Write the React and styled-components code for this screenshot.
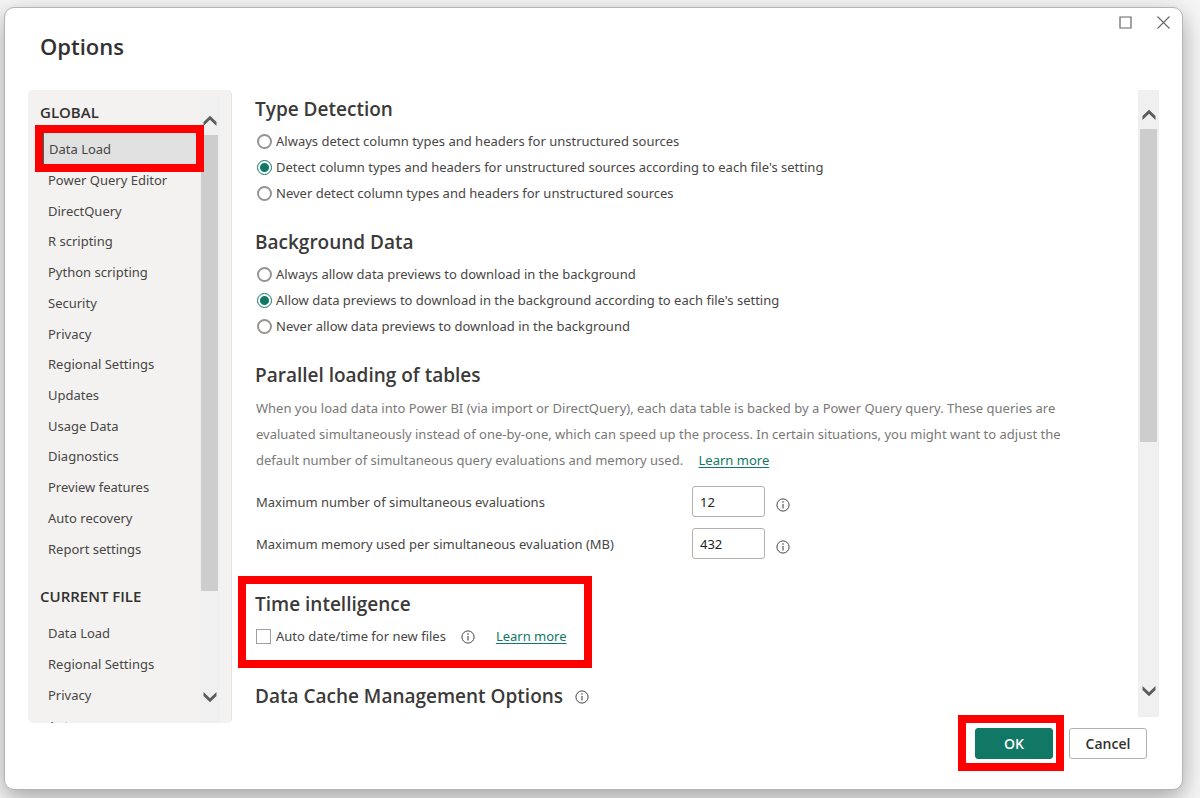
import React, { useState } from 'react';
import styled, { createGlobalStyle, css } from 'styled-components';

const GLOBAL_ITEMS = [
  'Data Load',
  'Power Query Editor',
  'DirectQuery',
  'R scripting',
  'Python scripting',
  'Security',
  'Privacy',
  'Regional Settings',
  'Updates',
  'Usage Data',
  'Diagnostics',
  'Preview features',
  'Auto recovery',
  'Report settings',
];

const FILE_ITEMS = ['Data Load', 'Regional Settings', 'Privacy', 'Auto recovery'];

const TYPE_OPTIONS = [
  'Always detect column types and headers for unstructured sources',
  "Detect column types and headers for unstructured sources according to each file's setting",
  'Never detect column types and headers for unstructured sources',
];

const BACKGROUND_OPTIONS = [
  'Always allow data previews to download in the background',
  "Allow data previews to download in the background according to each file's setting",
  'Never allow data previews to download in the background',
];

function Chevron({ down }) {
  return (
    <svg width="14" height="12" viewBox="0 0 14 12" aria-hidden="true">
      <path
        d={down ? 'M0.5 1v4L7 11.2 13.5 5V1L7 7.2z' : 'M0.5 11V7L7 0.8 13.5 7v4L7 4.8z'}
        fill="#5c5c5c"
      />
    </svg>
  );
}

function Scrollbar({ thumb, pad }) {
  return (
    <Track $pad={pad}>
      <ArrowButton type="button" aria-label="Scroll up">
        <Chevron />
      </ArrowButton>
      <Lane $pad={pad}>
        <Thumb $size={thumb} />
      </Lane>
      <ArrowButton type="button" aria-label="Scroll down">
        <Chevron down />
      </ArrowButton>
    </Track>
  );
}

function Info({ label }) {
  return (
    <InfoButton type="button" aria-label={label}>
      <svg width="14" height="14" viewBox="0 0 14 14" aria-hidden="true">
        <circle cx="7" cy="7" r="6.1" fill="none" stroke="#484644" />
        <path d="M7 6v4.4" stroke="#484644" strokeWidth="1.1" />
        <circle cx="7" cy="4" r="0.8" fill="#484644" />
      </svg>
    </InfoButton>
  );
}

function RadioGroup({ title, name, options }) {
  const [value, setValue] = useState(1);
  return (
    <Section>
      <Heading>{title}</Heading>
      {options.map((text, i) => (
        <Choice key={text}>
          <Radio name={name} checked={value === i} onChange={() => setValue(i)} />
          {text}
        </Choice>
      ))}
    </Section>
  );
}

function App() {
  return (
    <Page>
      <GlobalStyle />
      <Dialog role="dialog" aria-labelledby="title">
        <WindowBar>
          <WindowButton type="button" aria-label="Maximize">
            <svg width="13" height="13" viewBox="0 0 13 13">
              <path d="M1 1h11v11H1z" fill="none" stroke="#666" strokeWidth="1.2" />
            </svg>
          </WindowButton>
          <WindowButton type="button" aria-label="Close">
            <svg width="13" height="13" viewBox="0 0 13 13">
              <path d="M0.5 0.5l12 12M12.5 0.5l-12 12" fill="none" stroke="#666" strokeWidth="1.1" />
            </svg>
          </WindowButton>
        </WindowBar>
        <Title id="title">Options</Title>

        <Body>
          <Sidebar>
            <NavScroll>
              <NavTitle>GLOBAL</NavTitle>
              <NavList $height="430px">
                {GLOBAL_ITEMS.map((item, i) => (
                  <li key={item}>
                    <NavLink href="#" $active={i === 0}>{item}</NavLink>
                  </li>
                ))}
              </NavList>
              <NavTitle $second>CURRENT FILE</NavTitle>
              <NavList $height="123px">
                {FILE_ITEMS.map((item) => (
                  <li key={item}>
                    <NavLink href="#">{item}</NavLink>
                  </li>
                ))}
              </NavList>
            </NavScroll>
            <Scrollbar thumb="83%" />
          </Sidebar>

          <Content>
            <RadioGroup title="Type Detection" name="types" options={TYPE_OPTIONS} />
            <RadioGroup title="Background Data" name="background" options={BACKGROUND_OPTIONS} />
            <Section>
              <Heading>Parallel loading of tables</Heading>
              <Description>
                When you load data into Power BI (via import or DirectQuery), each data table is
                backed by a Power Query query. These queries are evaluated simultaneously instead
                of one-by-one, which can speed up the process. In certain situations, you might
                want to adjust the default number of simultaneous query evaluations and memory
                used. <Link href="#">Learn more</Link>
              </Description>
              <Field>
                <label htmlFor="evaluations">Maximum number of simultaneous evaluations</label>
                <NumberBox id="evaluations" defaultValue="12" />
                <Info label="About evaluations" />
              </Field>
              <Field>
                <label htmlFor="memory">Maximum memory used per simultaneous evaluation (MB)</label>
                <NumberBox id="memory" defaultValue="432" />
                <Info label="About memory" />
              </Field>
            </Section>
            <MarkedSection>
              <Heading>Time intelligence</Heading>
              <Row $wide>
                <Choice>
                  <Checkbox />
                  Auto date/time for new files
                </Choice>
                <Info label="About auto date/time" />
                <Link href="#">Learn more</Link>
              </Row>
            </MarkedSection>
            <Section>
              <Row>
                <Heading>Data Cache Management Options</Heading>
                <Info label="About data cache" />
              </Row>
            </Section>
          </Content>
          <Scrollbar thumb="57%" pad />
        </Body>

        <Footer>
          <OkFrame>
            <Button type="button" $primary>OK</Button>
          </OkFrame>
          <Button type="button">Cancel</Button>
        </Footer>
      </Dialog>
    </Page>
  );
}

const GlobalStyle = createGlobalStyle`
  * {
    box-sizing: border-box;
  }

  body {
    margin: 0;
    color: #484644;
    font-family: 'Noto Sans', 'Open Sans', sans-serif;
    font-size: 13px;
  }

  button, input {
    font: inherit;
  }
`;

const marked = css`
  outline: 8px solid #ff0000;
`;

const headingFont = css`
  font-family: 'Open Sans', 'Noto Sans', sans-serif;
  font-weight: 600;
`;

const Page = styled.main`
  display: flex;
  height: 100vh;
  padding: 7px 17px 8px 4px;
  overflow: hidden;
  background: #f6f6f6;
`;

const Dialog = styled.section`
  display: flex;
  flex: 1;
  flex-direction: column;
  min-width: 0;
  padding: 0 23px 30px;
  border: 1px solid #b4b4b4;
  border-radius: 10px;
  background: #fff;
  box-shadow: 0 8px 24px rgba(0, 0, 0, 0.34);
`;

const WindowBar = styled.div`
  display: flex;
  justify-content: flex-end;
  gap: 25px;
  height: 22px;
  margin-right: -23px;
  padding: 8px 12px 0 0;
`;

const WindowButton = styled.button`
  display: flex;
  width: 13px;
  height: 13px;
  padding: 0;
  border: 0;
  background: none;
`;

const Title = styled.h1`
  ${headingFont}
  margin: 1px 0 29px;
  padding-left: 12px;
  color: #323130;
  font-size: 22px;
  line-height: 30px;
`;

const Body = styled.div`
  display: flex;
  flex: 1;
  min-height: 0;
`;

const Sidebar = styled.nav`
  display: flex;
  flex: none;
  width: 204px;
  padding: 6px 11px 0 0;
  border-right: 1px solid #e4e3e2;
  border-radius: 5px;
  overflow: hidden;
  background: #f3f2f1;
`;

const NavScroll = styled.div`
  flex: 1;
  padding-left: 12px;
`;

const NavTitle = styled.h2`
  ${headingFont}
  margin: ${(props) => (props.$second ? '23px 0 11px' : '6px 0 11px')};
  color: #323130;
  font-size: 15px;
  line-height: 20px;
`;

const NavList = styled.ul`
  display: grid;
  grid-auto-rows: 1fr;
  height: ${(props) => props.$height};
  margin: 0;
  padding: 0 4px 0 3px;
  list-style: none;
`;

const NavLink = styled.a`
  display: flex;
  align-items: center;
  height: 100%;
  padding: 2px 0 0 5px;
  color: #484644;
  text-decoration: none;

  ${(props) =>
    props.$active &&
    css`
      ${marked}
      position: relative;
      z-index: 1;
      border-left: 1px solid #117865;
      background: #e1e1e1;
    `}
`;

const Track = styled.div`
  display: flex;
  flex: none;
  flex-direction: column;
  width: ${(props) => (props.$pad ? '21px' : '20px')};
  margin-bottom: ${(props) => (props.$pad ? '6px' : '0')};
  background: #f0f0f0;
`;

const ArrowButton = styled.button`
  display: flex;
  flex: none;
  align-items: center;
  justify-content: center;
  height: 39px;
  padding: 10px 0 0;
  border: 0;
  background: none;

  &:last-child {
    padding: 0 0 13px;
  }
`;

const Lane = styled.div`
  flex: 1;
  padding: ${(props) => (props.$pad ? '0 2px' : '0 2px 0 1px')};
`;

const Thumb = styled.div`
  height: ${(props) => props.$size};
  background: #cdcdcd;
`;

const Content = styled.div`
  flex: 1;
  min-width: 0;
  padding: 5px 13px 0 14px;
  overflow: hidden;
`;

const Section = styled.section`
  margin-bottom: 22px;
  padding-left: 9px;
`;

const MarkedSection = styled(Section)`
  ${marked}
  width: fit-content;
  margin: 25px 0 22px;
  padding: 6px 17px 11px 9px;
`;

const Heading = styled.h2`
  ${headingFont}
  margin: 0 0 5px;
  color: #3b3a39;
  font-size: 19px;
  line-height: 28px;
`;

const Choice = styled.label`
  display: flex;
  align-items: center;
  gap: 4px;
  height: 26px;
`;

const Radio = styled.input.attrs({ type: 'radio' })`
  width: 15px;
  height: 15px;
  margin: 0 0 0 2px;
  appearance: none;
  border: 2px solid #979593;
  border-radius: 50%;
  background: #fff;

  &:checked {
    border: 1px solid #117865;
    background: radial-gradient(circle, #117865 4px, #fff 5px);
  }
`;

const Checkbox = styled.input.attrs({ type: 'checkbox' })`
  width: 15px;
  height: 15px;
  margin: 0 1px;
  appearance: none;
  border: 1px solid #a19f9d;
  background: #fff;

  &:checked {
    background: #117865;
  }
`;

const Description = styled.p`
  max-width: 840px;
  margin: 6px 0 13px 1px;
  color: #7a7876;
  line-height: 26px;
`;

const Link = styled.a`
  margin-left: 12px;
  color: #117865;
  text-underline-offset: 2px;
`;

const Field = styled.div`
  display: grid;
  grid-template-columns: 436px 73px 14px;
  align-items: center;
  height: 31px;
  margin: 0 0 11px 1px;

  button {
    margin: 6px 0 0 11px;
  }
`;

const NumberBox = styled.input`
  width: 73px;
  height: 31px;
  padding: 0 7px;
  border: 1px solid #b3b0ad;
  border-radius: 3px;
  color: #201f1e;
`;

const InfoButton = styled.button`
  display: flex;
  flex: none;
  width: 14px;
  height: 14px;
  margin: 2px 6px 0 12px;
  padding: 0;
  border: 0;
  background: none;
`;

const Row = styled.div`
  display: flex;
  align-items: center;
  gap: ${(props) => (props.$wide ? '3px' : '0')};

  ${Heading} {
    margin-bottom: 0;
  }
`;

const Footer = styled.footer`
  display: flex;
  justify-content: flex-end;
  gap: 13px;
  padding: 5px 12px 0 0;
`;

const OkFrame = styled.div`
  ${marked}
  margin: -5px 0 -4px;
  padding: 5px 3px 4px 9px;
`;

const Button = styled.button`
  ${headingFont}
  display: block;
  width: 78px;
  height: 31px;
  border: 1px solid ${(props) => (props.$primary ? '#117865' : '#b3b0ad')};
  border-radius: 3px;
  background: ${(props) => (props.$primary ? '#117865' : '#fff')};
  color: ${(props) => (props.$primary ? '#fff' : '#323130')};
  font-size: 14px;
`;

export default App;
